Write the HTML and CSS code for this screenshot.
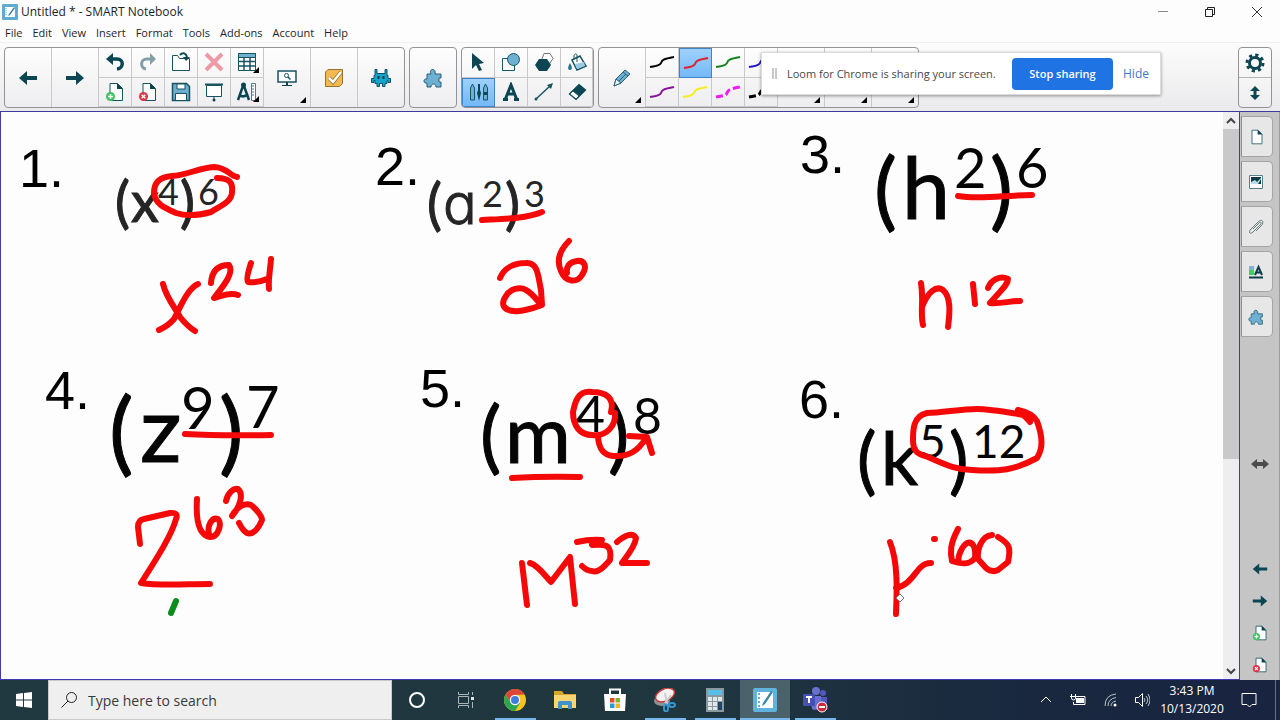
FILE: index.html
```html
<!DOCTYPE html>
<html lang="en">
<head>
<meta charset="utf-8">
<title>Untitled * - SMART Notebook</title>
<link rel="stylesheet" href="styles.css">
</head>
<body>
<svg class="defs" aria-hidden="true">
  <symbol id="left" viewBox="0 0 20 20"><path d="M1 10 9 3v5h10v4H9v5z" fill="#0b4652"/></symbol>
  <symbol id="right" viewBox="0 0 20 20"><path d="M19 10 11 3v5H1v4h10v5z" fill="#0b4652"/></symbol>
  <symbol id="page" viewBox="0 0 20 20"><path d="M5 1.500h7.500l5 5v12H5z" fill="#fff" stroke="#175461"/><path d="M12 1v6h6z" fill="#0b4652"/></symbol>
  <symbol id="add" viewBox="0 0 20 20"><use href="#page"/><circle cx="5.500" cy="14.500" r="4.500" fill="#3fc463"/><path d="M5.500 12v5M3 14.500h5" stroke="#fff" stroke-width="1.500"/></symbol>
  <symbol id="del" viewBox="0 0 20 20"><use href="#page"/><circle cx="5.500" cy="14.500" r="4.500" fill="#dc3545"/><path d="m3.700 12.700 3.600 3.600m0-3.600-3.600 3.600" stroke="#fff" stroke-width="1.500"/></symbol>
  <symbol id="puzzle" viewBox="0 0 20 20"><path d="M4 6h4c-3-6 6-6 4 0h6v4h-2v4h2v5h-5c0-4-5-4-5 0H4v-4c-4 1-4-5 0-4z" fill="#6eb0d2" stroke="#2b6176"/></symbol>
  <symbol id="line" viewBox="0 0 26 16"><path d="M1 13C6 12 11 12 12 9S14 5 25 3" fill="none" stroke="currentColor" stroke-width="2"/></symbol>
</svg>

<header class="titlebar">
  <svg class="i16" viewBox="0 0 16 16"><rect width="16" height="16" rx="1" fill="#60abd0"/><path d="M3 3h10v10H3z" fill="#fff"/><path d="m12 3-5 7-1 2 2-1 5-7z" fill="#2b7fa8"/><path d="M4 4v8" stroke="#60abd0" stroke-dasharray="1 1"/></svg>
  <h1>Untitled * - SMART Notebook</h1>
  <div class="winctl">
    <button aria-label="Minimize"><svg class="i12" viewBox="0 0 12 12"><path d="M1 5.500h10" stroke="#888"/></svg></button>
    <button aria-label="Restore"><svg class="i12" viewBox="0 0 12 12"><path d="M1.500 3.500h7v7h-7zM3.500 3V1.500h7v7H9" fill="none" stroke="#222"/></svg></button>
    <button aria-label="Close"><svg class="i12" viewBox="0 0 12 12"><path d="m1 1 10 10M11 1 1 11" stroke="#333"/></svg></button>
  </div>
</header>

<nav class="menubar">
  <button>File</button><button>Edit</button><button>View</button><button>Insert</button><button>Format</button><button>Tools</button><button>Add-ons</button><button>Account</button><button>Help</button>
</nav>

<div class="toolbar">
  <div class="group">
    <button class="big" aria-label="Previous page"><svg class="i20"><use href="#left"/></svg></button>
    <button class="big" aria-label="Next page"><svg class="i20"><use href="#right"/></svg></button>
    <div class="grid">
      <button aria-label="Undo"><svg class="i20" viewBox="0 0 20 20"><path d="M6 7h6c7 0 7 9 0 10" fill="none" stroke="#0b4652" stroke-width="3.500"/><path d="M1 7 8 1v12z" fill="#0b4652"/></svg></button>
      <button aria-label="Redo"><svg class="i20" viewBox="0 0 20 20"><path d="M14 7H9C2 7 2 16 8 17" fill="none" stroke="#809fa6" stroke-width="3"/><path d="m18 7-6-6v12z" fill="#809fa6"/></svg></button>
      <button aria-label="Open"><svg class="i20" viewBox="0 0 20 20"><path d="M1.500 18.500v-15h5l2 3h10v12z" fill="#fff" stroke="#175461"/><path d="M9 3c3-3 6-2 7 2" fill="none" stroke="#0b4652" stroke-width="2"/><path d="M12 5h7l-4 4z" fill="#0b4652"/></svg></button>
      <button aria-label="Delete"><svg class="i20" viewBox="0 0 20 20"><path d="m2 2 16 16M18 2 2 18" stroke="#ed9aa4" stroke-width="4"/></svg></button>
      <button class="more" aria-label="Table"><svg class="i20" viewBox="0 0 20 20"><path d="M1.500 1.500h17v17h-17z" fill="#fff" stroke="#175461"/><path d="M1.500 1.500h17v4h-17z" fill="#6eb0d2" stroke="#175461"/><path d="M1 9.500h18M1 14h18M7 5v13M13 5v13" stroke="#175461" stroke-width="1.500"/></svg></button>
      <button aria-label="Add page"><svg class="i20"><use href="#add"/></svg></button>
      <button aria-label="Delete page"><svg class="i20"><use href="#del"/></svg></button>
      <button aria-label="Save"><svg class="i20" viewBox="0 0 20 20"><path d="M1.500 1.500h14l3 3v14h-17z" fill="#6eadce" stroke="#175461" stroke-width="1.500"/><path d="M6 2h8v5H6zM4.500 11.500h11v7h-11z" fill="#fff" stroke="#175461"/></svg></button>
      <button aria-label="Screen shade"><svg class="i20" viewBox="0 0 20 20"><path d="M2.500 3.500h15v11h-15z" fill="#fff" stroke="#175461"/><path d="M1 2.500h18" stroke="#175461" stroke-width="2"/><path d="M10 15v3" stroke="#0b4652"/><circle cx="10" cy="18" r="1.500" fill="#0b4652"/></svg></button>
      <button class="more" aria-label="Measurement tools"><svg class="i20" viewBox="0 0 20 20"><path d="M6 4 1 18M7 4l5 14M2 13c3 2 6 2 9-1" fill="none" stroke="#0b4652" stroke-width="2.500"/><circle cx="6.500" cy="3" r="2.500" fill="#0b4652"/><path d="M14.500 1.500h4v17h-4z" fill="#fff" stroke="#507d88"/><path d="M15 4h2m-2 3h2m-2 3h2m-2 3h2" stroke="#507d88"/></svg></button>
    </div>
    <button class="big more" aria-label="Screen capture"><svg class="i20" viewBox="0 0 20 20"><path d="M1 3h18v11H1z" fill="#fff" stroke="#175461" stroke-width="1.500"/><path d="M9 14h2v3h4v1H5v-1h4z" fill="#0b4652"/><circle cx="9.500" cy="7.500" r="2" fill="none" stroke="#175461"/><path d="m11 9 2.500 2.500" stroke="#175461" stroke-width="1.500"/></svg></button>
    <button class="big" aria-label="Response"><svg class="i20" viewBox="0 0 20 20"><path d="M4 1.500h14.500v14l-3 3h-14V4z" fill="#f0b952" stroke="#96722b"/><path d="m5 10 4 4 8-10" fill="none" stroke="#96722b" stroke-width="4"/><path d="m5 10 4 4 8-10" fill="none" stroke="#fff" stroke-width="2.500"/></svg></button>
    <button class="big" aria-label="Game builder"><svg class="i20" viewBox="0 0 20 20"><path d="M4 1.500h2v4h8v-4h2v6h1v3h2.500v4H17v-2h-1v3h-2v3h-2.500v-3h-3v3H6v-3H4v-3H3v2H.500v-4H3v-3h1z" fill="#13a5ca" stroke="#115268"/><path d="M7.500 8v3m5-3v3" stroke="#073748" stroke-width="2"/></svg></button>
  </div>

  <div class="group"><button class="big" aria-label="Add-ons"><svg class="i20"><use href="#puzzle"/></svg></button></div>

  <div class="group">
    <div class="grid four narrow">
      <button aria-label="Select"><svg class="i20" viewBox="0 0 20 20"><path d="M4 1v16l4-4 3 6 3-1-3-6 5-1z" fill="#0b4652"/></svg></button>
      <button aria-label="Shapes"><svg class="i20" viewBox="0 0 20 20"><path d="M1.500 6.500h12v12h-12z" fill="#fff" stroke="#175461"/><circle cx="12.500" cy="7.500" r="6" fill="#6eb0d2" stroke="#175461"/></svg></button>
      <button aria-label="Regular polygons"><svg class="i20" viewBox="0 0 20 20"><path d="M10 1.500h6l3 5-4 6-8-3z" fill="#fff" stroke="#777"/><path d="M5 7h8l4 6-4 6H5l-4-6z" fill="#0b4652"/></svg></button>
      <button aria-label="Fill"><svg class="i20" viewBox="0 0 20 20"><path d="m5 8 8-4 6 10-9 4z" fill="#fff" stroke="#175461" stroke-width="1.500"/><path d="M10 10V3c-1-2-3-1-3 1v3" fill="none" stroke="#175461"/><path d="m8 12 9-2 1 4-8 3z" fill="#9acbe2"/><path d="M3 11c-3 5-2 7 0 7s3-2 0-7" fill="#2b748d"/></svg></button>
      <button class="on" aria-label="Pens" aria-pressed="true"><svg class="i20" viewBox="0 0 20 20"><path d="m1.500 6 2-4 2 4v12h-4zM14.500 6l2-4 2 4v12h-4z" fill="#6eb0d2" stroke="#175461"/><path d="M15 10h3v3h-3zM9 2h2v6l1 3-2 8-2-8 1-3z" fill="#0b4652"/></svg></button>
      <button aria-label="Text"><svg class="i20" viewBox="0 0 20 20"><path d="m4 18 6-15 6 15M7 12h6M2 17.500h5m6 0h5" fill="none" stroke="#0b4652" stroke-width="3"/></svg></button>
      <button aria-label="Lines"><svg class="i20" viewBox="0 0 20 20"><path d="M2 17 16 4" stroke="#175461" stroke-width="1.500"/><path d="m19 1-6 2 4 4z" fill="#175461"/><circle cx="2" cy="17" r="1.500" fill="#175461"/></svg></button>
      <button aria-label="Eraser"><svg class="i20" viewBox="0 0 20 20"><path d="m12 3 6 5-9 9-6-5z" fill="#0b4652" stroke="#0b4652" stroke-width="2"/><path d="m6 9 6 5-3 3-6-5z" fill="#fff" stroke="#175461"/></svg></button>
    </div>
  </div>

  <div class="group">
    <button class="big more" aria-label="Pen types"><svg class="i20" viewBox="0 0 20 20"><path d="m2 18 2-7 9-9 5 4-9 9z" fill="#6eb0d2" stroke="#2b6176"/><path d="m4 11 5 4-7 3z" fill="#e8f2f6" stroke="#2b6176"/><path d="m11 4 5 4M7 13l7-7" stroke="#2b6176"/></svg></button>
    <div class="grid four">
      <button class="c-black" aria-label="Black pen"><svg class="pen"><use href="#line"/></svg></button>
      <button class="c-red on" aria-label="Red pen" aria-pressed="true"><svg class="pen"><use href="#line"/></svg></button>
      <button class="c-green" aria-label="Green pen"><svg class="pen"><use href="#line"/></svg></button>
      <button class="c-blue" aria-label="Blue pen"><svg class="pen"><use href="#line"/></svg></button>
      <button class="c-purple" aria-label="Purple pen"><svg class="pen"><use href="#line"/></svg></button>
      <button class="c-yellow" aria-label="Yellow pen"><svg class="pen"><use href="#line"/></svg></button>
      <button class="c-pink" aria-label="Dashed pink pen"><svg class="pen" viewBox="0 0 26 16"><path d="M1 13C6 12 11 12 12 9S14 5 25 3" fill="none" stroke="currentColor" stroke-width="3" stroke-dasharray="7 3"/></svg></button>
      <button class="c-black" aria-label="Dashed black pen"><svg class="pen" viewBox="0 0 26 16"><path d="M1 13C6 12 11 12 12 9S14 5 25 3" fill="none" stroke="currentColor" stroke-width="3" stroke-dasharray="7 3"/></svg></button>
    </div>
    <button class="big more" aria-label="Color"></button>
    <button class="big more" aria-label="Thickness"></button>
    <button class="big more" aria-label="Line style"></button>
  </div>

  <div class="group stack">
    <button aria-label="Settings"><svg class="i20" viewBox="0 0 20 20"><circle cx="10" cy="10" r="5.500" fill="none" stroke="#0b4652" stroke-width="3"/><circle cx="10" cy="10" r="8" fill="none" stroke="#0b4652" stroke-width="3" stroke-dasharray="3.140 3.140"/></svg></button>
    <button aria-label="Move toolbar"><svg class="i16" viewBox="0 0 16 16"><path d="m8 1 5 5H9.500v4H13l-5 5-5-5h3.500V6H3z" fill="#0b4652"/></svg></button>
  </div>

  <aside class="loom">
    <span class="grip"></span>
    <span class="msg">Loom for Chrome is sharing your screen.</span>
    <button class="stop">Stop sharing</button>
    <a href="#">Hide</a>
  </aside>
</div>

<main class="work">
  <div class="stage">
    <svg class="board" viewBox="1 112 1222 567" preserveAspectRatio="xMinYMin meet">
      <g class="num">
        <text x="19" y="187">1.</text><text x="375" y="185">2.</text><text x="800" y="173">3.</text>
        <text x="45" y="409">4.</text><text x="420" y="407">5.</text><text x="799" y="418">6.</text>
      </g>
      <g class="math">
        <text class="s56 soft"><tspan x="115" y="222">(</tspan><tspan x="131">x</tspan><tspan class="s36" x="158" y="205">4</tspan><tspan x="180" y="222">)</tspan><tspan class="s36" x="198" y="205">6</tspan></text>
        <text class="s56 soft"><tspan x="427" y="224">(</tspan><tspan class="round" x="443">a</tspan><tspan class="s36" x="482" y="207">2</tspan><tspan x="505" y="224">)</tspan><tspan class="s36" x="524" y="207">3</tspan></text>
        <text class="s86"><tspan x="874" y="220">(</tspan><tspan x="902" y="219">h</tspan><tspan class="s56" x="954" y="188">2</tspan><tspan x="990" y="220">)</tspan><tspan class="s56" x="1016" y="188">6</tspan></text>
        <text class="s92"><tspan x="109" y="464">(</tspan><tspan x="140" y="462">z</tspan><tspan class="s58" x="181" y="429">9</tspan><tspan x="219" y="464">)</tspan><tspan class="s58" x="246" y="428">7</tspan></text>
        <text class="s80"><tspan x="480" y="464">(</tspan><tspan x="505" y="463">m</tspan><tspan class="s50" x="576" y="432">4</tspan><tspan x="608" y="464">)</tspan><tspan class="s50" x="633" y="434">8</tspan></text>
        <text class="s73"><tspan x="857" y="486">(</tspan><tspan x="881" y="485">k</tspan><tspan class="s46" x="919" y="458">5</tspan><tspan x="949" y="486">)</tspan><tspan class="s46" x="972" y="458">12</tspan></text>
      </g>
      <g class="ink">
        <path d="M237 177C230 176 226 167 214 167 198 168 188 175 172 176 158 177 154 184 154 193 155 204 165 208 176 213 188 217 200 215 211 212 220 206 232 202 232 192 233 183 230 178 217 178"/>
        <path d="M163 284C166 297 175 308 180 317Q187 326 195 331M198 284C187 289 180 308 174 319Q168 326 159 330"/>
        <path d="M211 283C212 269 220 265 229 265 234 272 226 283 214 298 222 296 230 292 238 295M251 263C248 272 246 280 248 282Q258 283 267 279M271 259C270 272 268 280 269 289"/>
        <path d="M482 220C500 219 525 219 542 212"/>
        <path d="M500 278C504 268 514 263 526 263 538 262 538 276 541 290L542 305C534 308 520 312 514 311 502 310 501 303 506 296 510 289 520 286 526 290 532 293 537 300 541 305"/>
        <path d="M569 241C560 250 556 260 561 271 566 283 577 283 582 275 588 266 584 260 577 261 569 262 566 267 567 273"/>
        <path d="M958 196C980 200 1005 195 1032 195M921 283C924 300 920 312 923 325M922 307C928 292 936 285 943 290 951 297 950 312 948 327M973 284 975 304M988 288C991 280 1000 275 1008 279 1008 285 1001 290 990 303 1000 304 1010 301 1020 301"/>
        <path d="M185 434Q220 436 271 435M140 544 138 527Q138 520 144 519L170 513Q179 512 176 519C172 534 159 555 141 583 160 586 185 584 210 584"/>
        <path d="M197 499C196 515 197 535 210 537 219 537 222 523 218 519 212 517 207 525 209 534M226 501C228 492 234 488 238 489 244 494 240 507 232 516 238 505 246 503 251 505 256 509 262 516 262 520 258 530 252 535 247 533Q243 531 239 523"/>
        <path d="M611 412C615 398 606 392 592 392 578 390 575 402 573 412 573 426 580 435 592 435 608 437 616 424 615 413M598 437C599 450 604 455 613 456 629 457 638 451 646 438M629 436 647 437 652 453M512 478Q545 476 580 477"/>
        <path d="M522 563 527 605M530 563C538 565 546 577 551 582L570 557 575 604M577 542Q590 539 602 540L592 545C607 544 612 545 610 560 603 568 598 573 592 571Q587 571 582 566M617 542C623 537 632 531 636 538 635 547 626 557 622 563L647 563"/>
        <path d="M1030 422C1027 417 1020 413 1018 410L1024 415C1000 411 990 409 977 409 960 409 942 413 927 413 913 416 913 430 913 440 913 453 919 454 928 457 948 466 958 470 972 470 1000 472 1015 470 1037 458 1043 448 1043 438 1037 421Q1032 413 1018 410"/>
        <path d="M890 542C898 562 897 590 896 614M896 588C910 585 915 572 921 567Q925 563 931 563M934 539h1M958 529C950 544 950 552 952 561 960 564 970 565 975 558 976 548 973 541 967 543 962 546 957 557 959 562M992 535C981 536 977 550 978 559L986 568Q992 573 998 570L1008 562C1011 548 1010 544 998 537"/>
        <path class="green" d="M176 601 171 613"/>
      </g>
      <path d="m900 594 4 4-4 4-4-4z" fill="#fff" stroke="#777"/>
    </svg>
    <div class="scroll">
      <button aria-label="Scroll up"><svg class="i10" viewBox="0 0 10 10"><path d="m1 7 4-4 4 4" fill="none" stroke="#444" stroke-width="2"/></svg></button>
      <div class="track"><div class="thumb"></div></div>
      <button aria-label="Scroll down"><svg class="i10" viewBox="0 0 10 10"><path d="m1 3 4 4 4-4" fill="none" stroke="#444" stroke-width="2"/></svg></button>
    </div>
  </div>
  <aside class="side">
    <div class="tabs">
      <button aria-label="Page sorter"><svg class="i16"><use href="#page"/></svg></button>
      <button aria-label="Gallery"><svg class="i16" viewBox="0 0 16 16"><path d="M1.500 1.500h13v13h-13z" fill="#fff" stroke="#567d88"/><path d="M3 3h10v7H3z" fill="#0b3c47"/><path d="m3 8 4-2 2 2 4-4v1l-3 5H3z" fill="#b9dbe8"/></svg></button>
      <button aria-label="Attachments"><svg class="i16" viewBox="0 0 16 16"><path d="m5 10 6-6c2-2 3 0 1 2l-7 7c-3 3-5 0-2-3l7-7c4-4 7 0 3 4l-5 5" fill="none" stroke="#6c7a80"/></svg></button>
      <button aria-label="Properties"><svg class="i16" viewBox="0 0 16 16"><path d="M1 2h5v4H1z" fill="#78b6d2"/><path d="M1 6h5v5H1z" fill="#42cc62"/><path d="m7 11 3.500-8 3.500 8M8 8.500h5" fill="none" stroke="#0b3c47" stroke-width="2"/><path d="M1 13.500h14" stroke="#0b3c47" stroke-width="2"/></svg></button>
      <button aria-label="Add-ons tab"><svg class="i16"><use href="#puzzle"/></svg></button>
    </div>
    <button class="resize" aria-label="Resize side bar"><svg class="i20" viewBox="0 0 20 20"><path d="m1 10 6-5v3h6V5l6 5-6 5v-3H7v3z" fill="#4b4b4b"/></svg></button>
    <div class="pager">
      <button aria-label="Back"><svg class="i16"><use href="#left"/></svg></button>
      <button aria-label="Forward"><svg class="i16"><use href="#right"/></svg></button>
      <button aria-label="Insert page"><svg class="i16"><use href="#add"/></svg></button>
      <button aria-label="Remove page"><svg class="i16"><use href="#del"/></svg></button>
    </div>
  </aside>
</main>

<footer class="taskbar">
  <button class="start" aria-label="Start"><svg class="i16" viewBox="0 0 16 16"><path d="m0 2 7-1v6.500H0zM8 1l8-1v7.500H8zM0 8.500h7V15l-7-1zM8 8.500h8V16l-8-1z" fill="#fff"/></svg></button>
  <label class="search">
    <svg class="i16" viewBox="0 0 16 16"><circle cx="10.500" cy="5.500" r="5" fill="none" stroke="#222"/><path d="M7 9 0.500 15.500" stroke="#222"/></svg>
    <input type="text" aria-label="Search" placeholder="Type here to search">
  </label>
  <div class="apps">
    <button aria-label="Cortana"><svg class="i20" viewBox="0 0 20 20"><circle cx="10" cy="10" r="7" fill="none" stroke="#fff" stroke-width="2"/></svg></button>
    <button aria-label="Task view"><svg class="i20" viewBox="0 0 20 20"><path d="M2.500 6.500h10v7h-10zM2.500 2v2.500h10V2m-10 16v-2.500h10V18M16.500 2v3m0 7v6" fill="none" stroke="#a9b6ba"/><path d="M15 7h3v3h-3z" fill="#dfe6e8"/></svg></button>
    <button class="run" aria-label="Chrome"><svg class="i22" viewBox="0 0 22 22"><circle cx="11" cy="11" r="11" fill="#f8c51c"/><path d="M1.500 5.500A11 11 0 0 1 20.500 5.500L11 6 7 14z" fill="#dc4639"/><path d="M1.500 5.500A11 11 0 0 0 11 22l5-8-9 0z" fill="#2da652"/><circle cx="11" cy="11" r="5.200" fill="#fff"/><circle cx="11" cy="11" r="4" fill="#3d7de2"/></svg></button>
    <button aria-label="File Explorer"><svg class="i22" viewBox="0 0 22 22"><path d="M0 2h8l2 3h12v14H0z" fill="#d9a42a"/><path d="M0 6h22v13H0z" fill="#f8d472"/><path d="M4 20v-6q0-2 2-2h10q2 0 2 2v6h-4v-4H8v4z" fill="#3c93d0"/></svg></button>
    <button aria-label="Microsoft Store"><svg class="i24" viewBox="0 0 24 24"><path d="M7 7V1.500h10V7" fill="none" stroke="#fff" stroke-width="2"/><path d="M1 6h22l-1 17H2z" fill="#fff"/><path d="M7 10h4.500v4.500H7z" fill="#e74b2b"/><path d="M12.500 10H17v4.500h-4.500z" fill="#7eb729"/><path d="M7 15.500h4.500V20H7z" fill="#249bd8"/><path d="M12.500 15.500H17V20h-4.500z" fill="#f3b51c"/></svg></button>
    <button class="run" aria-label="Snipping Tool"><svg class="i24" viewBox="0 0 24 24"><ellipse cx="9" cy="13" rx="8" ry="5" fill="#8d9495"/><ellipse cx="12" cy="7" rx="10" ry="6" fill="#f5f1f1" stroke="#c9393c" stroke-width="1.500" transform="rotate(-25 12 7)"/><path d="m12 5 2 11M18 7l-6 8" stroke="#c9cfd2" stroke-width="2"/><ellipse cx="13" cy="20" rx="2" ry="3.500" fill="none" stroke="#3797d2" stroke-width="2"/><ellipse cx="19" cy="17" rx="3" ry="2" fill="none" stroke="#3797d2" stroke-width="2"/></svg></button>
    <button class="run" aria-label="Calculator"><svg class="i24" viewBox="0 0 24 24"><path d="M3 0h18v24H3z" fill="#8a989f"/><path d="M5 2h14v5H5z" fill="#55c1ea"/><path d="M5 9h4v4H5zm5 0h4v4h-4zm5 0h4v4h-4zM5 14h4v4H5zm5 0h4v4h-4zM5 19h4v3H5zm5 0h4v3h-4z" fill="#e3e7e9"/><path d="M15 14h4v8h-4z" fill="#214569"/></svg></button>
    <button class="run active" aria-label="SMART Notebook"><svg class="i24" viewBox="0 0 24 24"><rect width="24" height="24" rx="2" fill="#60b4dc"/><path d="M4 4h16v16H4z" fill="#fff"/><path d="m18 3-8 12-1 3 3-2 8-12z" fill="#3285ac"/><path d="M6 5v14" stroke="#60b4dc" stroke-width="2" stroke-dasharray="2 2"/></svg></button>
    <button class="run" aria-label="Teams"><svg class="i26" viewBox="0 0 26 26"><circle cx="14" cy="4" r="4" fill="#6b70ce"/><circle cx="21" cy="6" r="3" fill="#5159bd"/><path d="M8 9h11v9q-4 7-9 4z" fill="#6b70ce"/><path d="M19 10h6v7q-2 4-6 3z" fill="#5159bd"/><rect x="1" y="7" width="12" height="12" rx="1" fill="#4550b5"/><path d="M4 10h6M7 10v6" stroke="#fff" stroke-width="2"/><circle cx="20" cy="20" r="5" fill="#c92a3e" stroke="#fff"/><path d="M17 20h6" stroke="#fff" stroke-width="2"/></svg></button>
  </div>
  <div class="tray">
    <button aria-label="Show hidden icons"><svg class="i12" viewBox="0 0 12 12"><path d="m1 8 5-5 5 5" fill="none" stroke="#fff"/></svg></button>
    <button aria-label="Battery"><svg class="i16" viewBox="0 0 16 16"><path d="M5 4.500h10v8H3.500V10" fill="none" stroke="#fff"/><path d="M6 6h8v5H6z" fill="#fff"/><path d="M1.500 2v4q0 2 2 2t2-2V2M0 4.500h6" fill="none" stroke="#fff"/></svg></button>
    <button aria-label="Wi-Fi"><svg class="i16" viewBox="0 0 16 16"><path d="M3 14Q3 3 14 2M6 14Q6 7 14 5.500M9 14q0-4 5-5" fill="none" stroke="#b9c3cc"/><circle cx="13" cy="13" r="1.500" fill="#fff"/></svg></button>
    <button aria-label="Volume"><svg class="i16" viewBox="0 0 16 16"><path d="M1.500 5.500h3l4-4v13l-4-4h-3z" fill="none" stroke="#fff"/><path d="M10 6q2 2 0 4m2-6q3.500 4 0 8m2-10q4 6 0 12" fill="none" stroke="#b9c3cc"/></svg></button>
    <div class="clock"><time>3:43 PM</time><time>10/13/2020</time></div>
    <button class="note" aria-label="Notifications"><svg class="i16" viewBox="0 0 16 16"><path d="M1 1.500h14v11h-4L8.500 15 6 12.500H1z" fill="none" stroke="#fff"/></svg></button>
  </div>
</footer>
</body>
</html>
```
FILE: styles.css
```css
* { box-sizing: border-box; }
body {
  margin: 0;
  height: 100vh;
  display: flex;
  flex-direction: column;
  overflow: hidden;
  font-family: "Open Sans", "Noto Sans", sans-serif;
  font-size: 11px;
  color: #1f1f1f;
  background: #fdfdfd;
}
button {
  border: 0;
  padding: 0;
  background: none;
  font: inherit;
  color: inherit;
  display: flex;
  align-items: center;
  justify-content: center;
}
svg { display: block; flex: none; }
.defs { position: absolute; width: 0; height: 0; }
.i10 { width: 10px; height: 10px; }
.i12 { width: 12px; height: 12px; }
.i16 { width: 16px; height: 16px; }
.i20 { width: 20px; height: 20px; }
.i22 { width: 22px; height: 22px; }
.i24 { width: 24px; height: 24px; }
.i26 { width: 26px; height: 26px; }
.pen { width: 26px; height: 16px; }

.titlebar { display: flex; align-items: center; height: 23px; padding-left: 2px; gap: 3px; }
.titlebar h1 { margin: 0; font-size: 12px; font-weight: 400; }
.winctl { display: flex; margin-left: auto; }
.winctl button { width: 47px; height: 23px; }

.menubar { display: flex; align-items: center; height: 20px; padding-left: 5px; gap: 10px; border-bottom: 1px solid #f0f0f0; }

.toolbar {
  position: relative;
  display: flex;
  gap: 4px;
  height: 69px;
  padding: 4px 8px 4px 4px;
  background: linear-gradient(#fcfcfc, #eaeaec);
  border-bottom: 1px solid #413a9c;
}
.group {
  display: flex;
  height: 61px;
  border: 1px solid #939397;
  border-radius: 4px;
  background: linear-gradient(#fdfdfd, #eeeef0);
  overflow: hidden;
}
.big { width: 47px; position: relative; border-right: 1px solid #c9c9cc; }
.group > .big:last-child { width: 46px; border-right: 0; }
.grid { display: grid; grid-template-columns: repeat(5, 33px); grid-template-rows: 1fr 1fr; }
.grid.four { grid-template-columns: repeat(4, 33px); }
.grid.narrow { grid-template-columns: repeat(3, 33px) 32px; }
.grid button { position: relative; border-right: 1px solid #c9c9cc; border-bottom: 1px solid #c9c9cc; }
.more::after {
  content: "";
  position: absolute;
  right: 4px;
  bottom: 4px;
  border-left: 6px solid transparent;
  border-bottom: 6px solid #000;
}
.grid .on { background: linear-gradient(#9fd0fb, #74b9f8); border: 1px solid #3f83cb; }
.c-black { color: #000; }
.c-red { color: #e01f2c; }
.c-green { color: #12851f; }
.c-blue { color: #2018c8; }
.c-purple { color: #86149a; }
.c-yellow { color: #f4ef1c; }
.c-pink { color: #f31af0; }
.stack { flex-direction: column; margin-left: auto; width: 34px; }
.stack button { flex: 1; }
.stack button + button { border-top: 1px solid #b5b5b8; }

.loom {
  position: absolute;
  left: 761px;
  top: 9px;
  display: flex;
  align-items: center;
  height: 43px;
  padding: 0 11px 0 10px;
  background: #fff;
  border: 1px solid #dcdcdc;
  box-shadow: 0 1px 3px #0006;
  color: #484848;
}
.grip { width: 5px; height: 11px; margin-right: 10px; border: solid #c8c8c8; border-width: 0 2px; }
.msg { min-width: 214px; }
.stop { width: 101px; height: 32px; margin: 0 10px 0 11px; border-radius: 4px; background: #1f73e3; color: #fff; font-weight: 600; }
.loom a { color: #3d78cf; text-decoration: none; font-size: 12px; }

.work { flex: 1; display: flex; min-height: 0; }
.stage { flex: 1; display: flex; min-width: 0; background: #fdfdfd; border: solid #413ab0; border-width: 0 1px 1px; }
.board { flex: 1; min-width: 0; height: 100%; }
.num { font-family: "Liberation Sans", Arial, sans-serif; font-size: 54px; }
.math { font-family: Lato, "Open Sans", sans-serif; fill: #050505; stroke: #050505; stroke-width: 1; }
.soft { fill: #252525; stroke: #252525; }
.round { font-family: Inter, sans-serif; font-feature-settings: "cv11"; font-weight: 300; }
.s36 { font-size: 36px; stroke: none; }
.s46 { font-size: 46px; stroke: none; }
.s50 { font-size: 50px; stroke: none; }
.s56 { font-size: 56px; }
.s58 { font-size: 58px; stroke: none; }
.s73 { font-size: 73px; }
.s80 { font-size: 80px; }
.s86 { font-size: 86px; }
.s92 { font-size: 92px; }
.s86 .s56 { stroke: none; }
.ink { fill: none; stroke: #f50808; stroke-width: 6; stroke-linecap: round; stroke-linejoin: round; }
.ink .green { stroke: #0d8d1c; }

.scroll { width: 16px; display: flex; flex-direction: column; background: #eeeeef; }
.scroll button { height: 17px; }
.track { flex: 1; }
.thumb { height: 62%; background: #c9c9c9; }

.side { width: 40px; display: flex; flex-direction: column; background: #c5c5c5; border-right: 1px solid #9c9c9c; }
.tabs { display: flex; flex-direction: column; gap: 4px; padding: 4px 6px 0 1px; }
.tabs button { height: 41px; padding-right: 3px; border: 1px solid #a4a4a4; border-left-color: #8d8d8d; border-radius: 0 5px 5px 0; background: #e7e7e7; }
.resize { height: 24px; margin-top: 115px; }
.pager { margin-top: auto; display: flex; flex-direction: column; gap: 16px; padding-bottom: 7px; }

.taskbar { display: flex; height: 40px; background: linear-gradient(90deg, #20383f, #1f363f 55%, #19283f 80%, #192440); color: #fff; }
.start { width: 48px; }
.search { display: flex; align-items: center; width: 344px; padding-left: 12px; gap: 11px; background: #efefef; border: 1px solid #c9c9c9; }
.search input { flex: 1; min-width: 0; border: 0; padding: 0; background: none; outline: 0; font: 14px "Open Sans", sans-serif; color: #222; }
.search input::placeholder { color: #3a3a3a; opacity: 1; }
.apps { display: flex; }
.apps button { width: 50px; }
.apps button:first-child, .apps button:nth-child(2) { width: 49px; }
.run { position: relative; }
.run::after { content: ""; position: absolute; left: 5px; right: 4px; bottom: 0; height: 2px; background: #78b6ee; }
.active { background: #4b626b; }
.active::after { left: 0; right: 0; }
.tray { margin-left: auto; margin-right: 4px; display: flex; align-items: center; border-right: 1px solid #66718a; }
.tray button { width: 32px; height: 40px; }
.clock { width: 68px; display: flex; flex-direction: column; align-items: center; font-size: 12px; line-height: 18px; }
.tray .note { width: 45px; margin-right: 4px; }
```
